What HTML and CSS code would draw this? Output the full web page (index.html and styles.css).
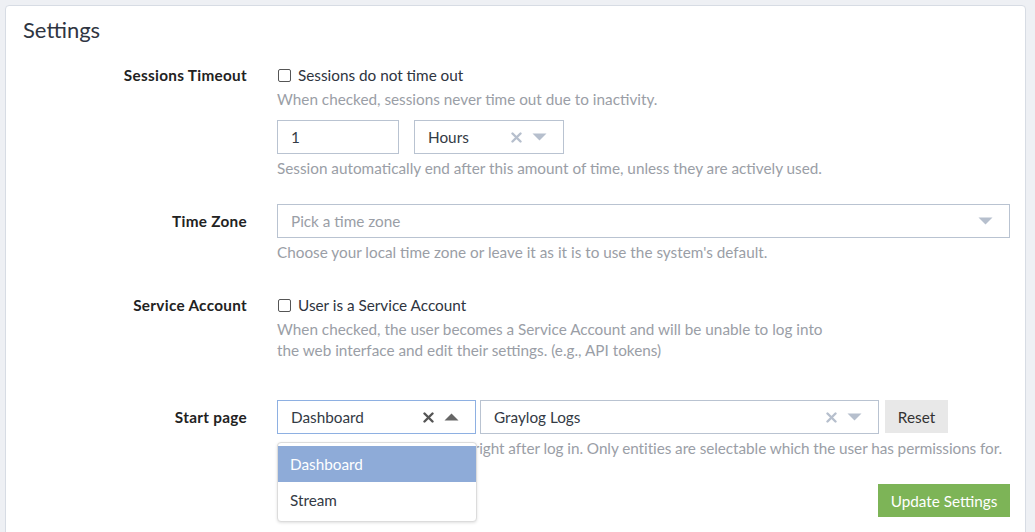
FILE: index.html
```html
<!DOCTYPE html>
<html>
<head>
<meta charset="utf-8">
<link rel="stylesheet" href="styles.css">
</head>
<body>
<div class="card">
  <h2 class="title">Settings</h2>

  <div class="row row-timeout">
    <div class="label label-line">Sessions Timeout</div>
    <div class="field">
      <label class="check"><span class="box"></span>Sessions do not time out</label>
      <div class="help">When checked, sessions never time out due to inactivity.</div>
      <div class="inline-controls">
        <div class="input num">1</div>
        <div class="select hours">
          <span class="value">Hours</span>
          <span class="clear light"><svg width="11" height="11" viewBox="0 0 11 11"><path d="M1.5 1.5 L9.5 9.5 M9.5 1.5 L1.5 9.5" stroke="currentColor" stroke-width="2.4" stroke-linecap="round"/></svg></span>
          <span class="arrow light"><svg width="15" height="8" viewBox="0 0 15 8"><path d="M0.5 0.5 H14.5 L7.5 7.5 Z" fill="currentColor"/></svg></span>
        </div>
      </div>
      <div class="help">Session automatically end after this amount of time, unless they are actively used.</div>
    </div>
  </div>

  <div class="row row-tz">
    <div class="label label-select">Time Zone</div>
    <div class="field">
      <div class="select full">
        <span class="value placeholder">Pick a time zone</span>
        <span class="arrow light"><svg width="15" height="8" viewBox="0 0 15 8"><path d="M0.5 0.5 H14.5 L7.5 7.5 Z" fill="currentColor"/></svg></span>
      </div>
      <div class="help">Choose your local time zone or leave it as it is to use the system's default.</div>
    </div>
  </div>

  <div class="row row-sa">
    <div class="label label-line">Service Account</div>
    <div class="field">
      <label class="check"><span class="box"></span>User is a Service Account</label>
      <div class="help">When checked, the user becomes a Service Account and will be unable to log into<br>the web interface and edit their settings. (e.g., API tokens)</div>
    </div>
  </div>

  <div class="row row-start">
    <div class="label label-select">Start page</div>
    <div class="field">
      <div class="inline-controls tight">
        <div class="select type focused">
          <span class="value">Dashboard</span>
          <span class="clear dark"><svg width="11" height="11" viewBox="0 0 11 11"><path d="M1.5 1.5 L9.5 9.5 M9.5 1.5 L1.5 9.5" stroke="currentColor" stroke-width="2.4" stroke-linecap="round"/></svg></span>
          <span class="arrow dark"><svg width="15" height="8" viewBox="0 0 15 8"><path d="M0.5 7.5 H14.5 L7.5 0.5 Z" fill="currentColor"/></svg></span>
          <div class="menu">
            <div class="option active">Dashboard</div>
            <div class="option">Stream</div>
          </div>
        </div>
        <div class="select entity">
          <span class="value">Graylog Logs</span>
          <span class="clear light"><svg width="11" height="11" viewBox="0 0 11 11"><path d="M1.5 1.5 L9.5 9.5 M9.5 1.5 L1.5 9.5" stroke="currentColor" stroke-width="2.4" stroke-linecap="round"/></svg></span>
          <span class="arrow light"><svg width="15" height="8" viewBox="0 0 15 8"><path d="M0.5 0.5 H14.5 L7.5 7.5 Z" fill="currentColor"/></svg></span>
        </div>
        <button class="btn reset">Reset</button>
      </div>
      <div class="help nowrap">Select the page the user sees right after log in. Only entities are selectable which the user has permissions for.</div>
    </div>
  </div>

  <div class="actions">
    <button class="btn primary">Update Settings</button>
  </div>
</div>
</body>
</html>
```

FILE: styles.css
```css
* { box-sizing: border-box; }
html, body { margin: 0; }
body {
  background: #eef0f4;
  padding: 5px 9px 0 5px;
  font-family: Lato, "Open Sans", sans-serif;
  font-size: 15.3px;
  color: #333a45;
  height: 532px;
  overflow: hidden;
}
.card {
  background: #fff;
  border: 1px solid #d7dce4;
  border-radius: 4px;
  padding: 11px 15px 20px 16px;
  min-height: 600px;
}
.title {
  margin: 0 0 0 1px;
  font-weight: 400;
  font-size: 22px;
  line-height: 26px;
  color: #2f3542;
}
.row {
  display: grid;
  grid-template-columns: 225px 1fr;
  column-gap: 30px;
}
.row-timeout { margin-top: 22px; }
.row-tz { margin-top: 25px; }
.row-sa { margin-top: 32px; }
.row-start { margin-top: 39px; }
.label {
  text-align: right;
  font-weight: 700;
  letter-spacing: 0.3px;
  color: #222;
  line-height: 20px;
}
.label-select { line-height: 34px; }
.field { min-width: 0; }
.check {
  display: flex;
  align-items: center;
  height: 20px;
  line-height: 20px;
  color: #2e3440;
}
.box {
  width: 13px;
  height: 13px;
  border: 1px solid #555;
  border-radius: 2px;
  margin: 0 7px 0 1px;
  background: #fff;
}
.help {
  margin-top: 4px;
  color: #9a9ea6;
  line-height: 21px;
}
.help.nowrap { white-space: nowrap; letter-spacing: -0.06px; }
.inline-controls {
  display: flex;
  gap: 15px;
  margin-top: 10px;
}
.inline-controls.tight { gap: 4px; margin-top: 0; }
.input, .select {
  height: 34px;
  border: 1px solid #b9c3d1;
  background: #fff;
  display: flex;
  align-items: center;
  color: #333a45;
}
.input.num { width: 122px; padding-left: 13px; }
.select { position: relative; padding-left: 13px; padding-right: 16px; }
.select .value { flex: 1; white-space: nowrap; }
.select .placeholder { color: #9a9ea6; }
.select.hours { width: 150px; }
.select.full { width: 100%; }
.select.type { width: 199px; }
.select.focused { border-color: #8eb0e2; }
.select.entity { width: 399px; }
.clear { display: flex; margin-right: 10px; }
.arrow { display: flex; }
.light { color: #b6bfcd; }
.dark { color: #666; }
.clear.dark { color: #555; }
.btn {
  font-family: inherit;
  font-size: 15.3px;
  border: none;
  cursor: pointer;
}
.reset {
  margin-left: 2px;
  width: 63px;
  height: 33px;
  background: #e8e8e8;
  color: #333;
  border-radius: 0;
  padding: 0;
}
.menu {
  position: absolute;
  top: 41px;
  left: -1px;
  width: 200px;
  background: #fff;
  border: 1px solid #dcdcdc;
  border-radius: 4px;
  box-shadow: 0 1px 3px rgba(0,0,0,0.12);
  padding: 3px 0;
  z-index: 5;
}
.option {
  height: 36px;
  line-height: 36px;
  padding-left: 12px;
  color: #333a45;
}
.option.active {
  background: #8eabd8;
  color: #fff;
}
.actions {
  display: flex;
  justify-content: flex-end;
  margin-top: 25px;
}
.primary {
  width: 132px;
  height: 33px;
  background: #7db457;
  color: #fff;
  padding: 0;
}
```
